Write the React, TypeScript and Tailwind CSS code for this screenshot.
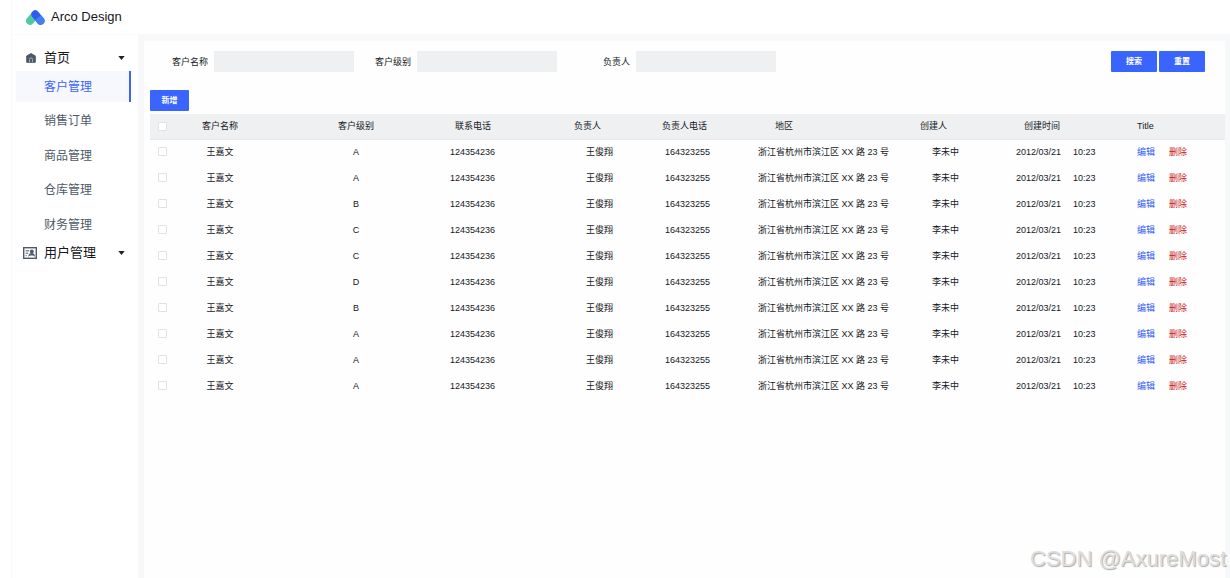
import { useState } from 'react';

const NAV_ITEMS = ['客户管理', '销售订单', '商品管理', '仓库管理', '财务管理'];

const LEVELS = ['A', 'A', 'B', 'C', 'C', 'D', 'B', 'A', 'A', 'A'];

interface Customer {
  id: number;
  name: string;
  level: string;
  phone: string;
  owner: string;
  ownerPhone: string;
  address: string;
  creator: string;
  date: string;
  time: string;
}

const CUSTOMERS: Customer[] = LEVELS.map((level, i) => ({
  id: i + 1,
  name: '王嘉文',
  level,
  phone: '124354236',
  owner: '王俊翔',
  ownerPhone: '164323255',
  address: '浙江省杭州市滨江区 XX 路 23 号',
  creator: '李未中',
  date: '2012/03/21',
  time: '10:23',
}));

const CHECKBOX =
  'block w-[9px] h-[9px] mx-auto appearance-none rounded-[1px] border border-[#dfe1e7] bg-white checked:bg-[#3964fe]';
const BUTTON = 'h-[21px] pt-[1px] rounded-[1px] bg-[#3964fe] text-[8px] font-bold text-white';

function Logo() {
  return (
    <svg width="19" height="15" viewBox="0 0 19 15" fill="none" aria-hidden="true">
      <path d="M4 10.8 9 5" stroke="#4fcaa0" strokeWidth="8" strokeLinecap="round" />
      <path d="M9.2 4.2 14.6 10.8" stroke="#2f5bf5" strokeWidth="7.8" strokeLinecap="round" />
      <path d="M12 7.6 14.6 10.8" stroke="#4080f0" strokeWidth="7.8" />
      <circle cx="14.6" cy="10.8" r="3.9" fill="#4080f0" />
    </svg>
  );
}

function HomeIcon() {
  return (
    <svg width="10" height="10" viewBox="0 0 10 10" aria-hidden="true">
      <path d="M5 .6 9.3 2.9V9.3H.7V2.9z" fill="#4e5969" stroke="#4e5969" strokeWidth="1" strokeLinejoin="round" />
      <path d="M3.5 9V6.4a1.5 1.5 0 0 1 3 0V9" fill="none" stroke="#c3c8d2" strokeWidth=".7" />
    </svg>
  );
}

function UserCardIcon() {
  return (
    <svg width="14" height="12" viewBox="0 0 14 12" fill="none" stroke="#4e5969" aria-hidden="true">
      <rect x=".7" y=".7" width="12.6" height="10.6" strokeWidth="1.4" />
      <path d="M2.6 3.8h3.6M2.6 6.2h2.6M2.6 8.6h1" />
      <circle cx="8.8" cy="4.4" r="1.9" fill="#4e5969" stroke="none" />
      <path d="M5.2 9.8c.2-2.4 1.5-3.8 3.6-3.8s3 1.4 3.2 3.8L10.2 8.6H7.2z" fill="#4e5969" stroke="none" />
    </svg>
  );
}

function Caret() {
  return (
    <svg width="7" height="4" viewBox="0 0 7 4" className="ml-auto" aria-hidden="true">
      <path d="M.3 0h6.4L3.5 4z" fill="#1d2129" />
    </svg>
  );
}

function SearchField({ id, label }: { id: string; label: string }) {
  return (
    <div className="flex items-center gap-[6px]">
      <label htmlFor={id} className="pt-[1px] whitespace-nowrap">
        {label}
      </label>
      <input id={id} type="text" className="w-[140px] h-[21px] px-2 bg-[#eff0f2] outline-none" />
    </div>
  );
}

export default function App() {
  const [active, setActive] = useState(NAV_ITEMS[0]);

  return (
    <div className="relative flex flex-col min-h-screen pl-[11px] bg-white font-['Liberation_Sans','Noto_Sans_CJK_SC',sans-serif] text-[#15171c]">
      <header className="flex items-center gap-[6px] h-[35px] pl-[14px] border-l border-b border-[#f9f9fa]">
        <Logo />
        <span className="pb-[1px] text-[13px]">Arco Design</span>
      </header>

      <div className="flex flex-1">
        <nav className="w-[127px] shrink-0 pt-[10px] pl-1 pr-[7px] border-l border-[#f9f9fa]">
          <button className="flex items-center w-full h-[26px] pl-[10px] pr-[6px] text-[13px]">
            <HomeIcon />
            <span className="ml-2">首页</span>
            <Caret />
          </button>
          <ul className="flex flex-col justify-between h-[169px]">
            {NAV_ITEMS.map((item) => (
              <li key={item}>
                <button
                  onClick={() => setActive(item)}
                  className={`block w-full h-[31px] pl-7 border-r-2 text-left text-[12px] ${
                    active === item
                      ? 'border-[#3964fe] bg-[#f7f8fe] text-[#3964fe]'
                      : 'border-transparent text-[#4e5969]'
                  }`}
                >
                  {item}
                </button>
              </li>
            ))}
          </ul>
          <button className="flex items-center w-full h-[26px] pl-[7px] pr-[6px] text-[13px]">
            <UserCardIcon />
            <span className="ml-[7px]">用户管理</span>
            <Caret />
          </button>
        </nav>

        <main className="flex-1 flex pt-[6px] pl-[6px] pr-[5px] bg-[#f7f8fa] text-[9px] leading-[14px]">
          <section className="flex-1 pt-[10px] pl-[6px] rounded-t-[2px] bg-[#fefefe]">
            <form className="flex items-center pl-[22px] pr-5" onSubmit={(e) => e.preventDefault()}>
              <div className="flex gap-[21px]">
                <SearchField id="name" label="客户名称" />
                <SearchField id="level" label="客户级别" />
                <div className="ml-[25px]">
                  <SearchField id="owner" label="负责人" />
                </div>
              </div>
              <div className="flex gap-[2px] ml-auto">
                <button type="submit" className={`${BUTTON} w-[46px]`}>搜索</button>
                <button type="reset" className={`${BUTTON} w-[46px]`}>重置</button>
              </div>
            </form>

            <button className={`${BUTTON} block w-[39px] mt-[18px] mb-[3px]`}>新增</button>

            <table className="w-full table-fixed text-left whitespace-nowrap">
              <colgroup>
                <col className="w-[25px]" />
                <col className="w-[90px]" />
                <col className="w-[182px]" />
                <col className="w-[127px]" />
                <col className="w-[88px]" />
                <col className="w-[96px]" />
                <col className="w-[162px]" />
                <col className="w-[96px]" />
                <col className="w-[121px]" />
                <col className="w-[88px]" />
              </colgroup>
              <thead>
                <tr className="h-[25px] border-b border-[#e5e6eb] bg-[#eff0f2] *:font-normal">
                  <th>
                    <input type="checkbox" aria-label="全选" className={CHECKBOX} />
                  </th>
                  <th className="text-center">客户名称</th>
                  <th className="text-center">客户级别</th>
                  <th className="pl-2">联系电话</th>
                  <th>负责人</th>
                  <th>负责人电话</th>
                  <th className="pl-[17px]">地区</th>
                  <th>创建人</th>
                  <th className="pl-2">创建时间</th>
                  <th>Title</th>
                </tr>
              </thead>
              <tbody>
                {CUSTOMERS.map((c) => (
                  <tr key={c.id} className="h-[26px]">
                    <td className="pb-[1px]">
                      <input type="checkbox" aria-label={`${c.name} ${c.id}`} className={CHECKBOX} />
                    </td>
                    <td className="text-center">{c.name}</td>
                    <td className="text-center">{c.level}</td>
                    <td className="pl-[3px]">{c.phone}</td>
                    <td className="pl-3">{c.owner}</td>
                    <td className="pl-[3px]">{c.ownerPhone}</td>
                    <td>{c.address}</td>
                    <td className="pl-3">{c.creator}</td>
                    <td>
                      <span className="mr-3">{c.date}</span>
                      <span>{c.time}</span>
                    </td>
                    <td>
                      <a href="#edit" className="mr-[14px] text-[#2f5bf5]">编辑</a>
                      <a href="#delete" className="text-[#cb1420]">删除</a>
                    </td>
                  </tr>
                ))}
              </tbody>
            </table>
          </section>
        </main>
      </div>

      <div className="absolute right-1 bottom-[6px] text-[22px] leading-[26px] text-[#dedede] [text-shadow:1px_1px_1px_#aaa] pointer-events-none">
        CSDN @AxureMost
      </div>
    </div>
  );
}
